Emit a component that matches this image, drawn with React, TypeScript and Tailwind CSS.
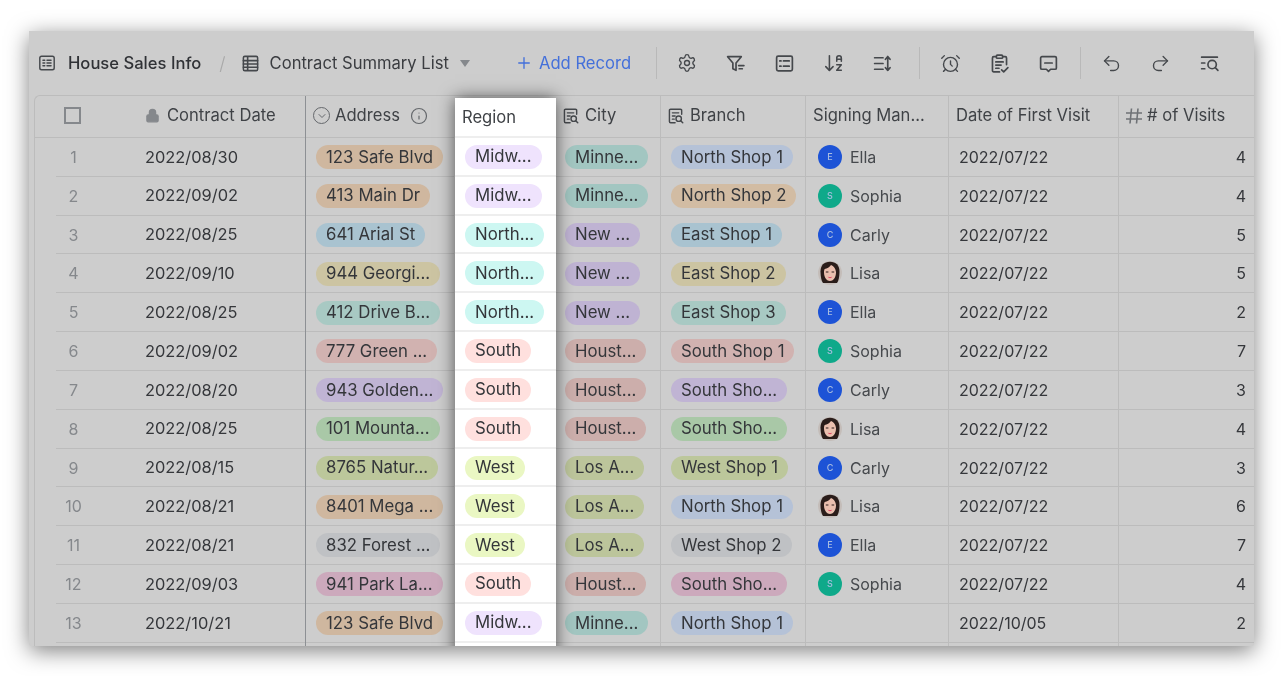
import React from "react";
import { Settings, ArrowDownAZ, AlarmClock, Undo2, Redo2, Plus, Lock, Info, ChevronDown } from "lucide-react";

const C = {
  tan: "bg-[#cfb79f]", sand: "bg-[#d2bca3]", lav: "bg-[#c0b4d4]", sky: "bg-[#a9c3d0]", khaki: "bg-[#ccc4a2]",
  teal: "bg-[#a8c9c3]", rose: "bg-[#d1b2b0]", green: "bg-[#a9c8a7]", olive: "bg-[#bcc79b]", grey: "bg-[#bfc1c4]",
  mauve: "bg-[#cca9bc]", blue: "bg-[#b5c2d7]", mint: "bg-[#a2c6c1]", newp: "bg-[#bfb3d3]", hou: "bg-[#ccaeab]", los: "bg-[#bcc59b]",
  mid: "bg-[#efe3fd]", north: "bg-[#cdf7f2]", south: "bg-[#ffe0de]", west: "bg-[#eaf7c3]",
};

const dates = ["2022/08/30","2022/09/02","2022/08/25","2022/09/10","2022/08/25","2022/09/02","2022/08/20","2022/08/25","2022/08/15","2022/08/21","2022/08/21","2022/09/03","2022/10/21",""];
const address: [string,string][] = [["123 Safe Blvd",C.tan],["413 Main Dr",C.tan],["641 Arial St",C.sky],["944 Georgi...",C.khaki],["412 Drive B...",C.teal],["777 Green ...",C.rose],["943 Golden...",C.lav],["101 Mounta...",C.green],["8765 Natur...",C.olive],["8401 Mega ...",C.tan],["832 Forest ...",C.grey],["941 Park La...",C.mauve],["123 Safe Blvd",C.tan]];
const region: [string,string][] = [["Midw...",C.mid],["Midw...",C.mid],["North...",C.north],["North...",C.north],["North...",C.north],["South",C.south],["South",C.south],["South",C.south],["West",C.west],["West",C.west],["West",C.west],["South",C.south],["Midw...",C.mid]];
const city: [string,string][] = [["Minne...",C.mint],["Minne...",C.mint],["New ...",C.newp],["New ...",C.newp],["New ...",C.newp],["Houst...",C.hou],["Houst...",C.hou],["Houst...",C.hou],["Los A...",C.los],["Los A...",C.los],["Los A...",C.los],["Houst...",C.hou],["Minne...",C.mint]];
const branch: [string,string][] = [["North Shop 1",C.blue],["North Shop 2",C.sand],["East Shop 1",C.sky],["East Shop 2",C.khaki],["East Shop 3",C.teal],["South Shop 1",C.rose],["South Sho...",C.lav],["South Sho...",C.green],["West Shop 1",C.olive],["North Shop 1",C.blue],["West Shop 2",C.grey],["South Sho...",C.mauve],["North Shop 1",C.blue]];
const people = ["Ella","Sophia","Carly","Lisa","Ella","Sophia","Carly","Lisa","Carly","Lisa","Ella","Sophia",""];
const firstVisit = [...Array(12).fill("2022/07/22"), "2022/10/05"];
const visits = [4,4,5,5,2,7,3,4,3,6,7,4,2];
const ROWS = 14;

const Pill = ({ t, c }: { t: string; c: string }) => (
  <span className={`${c} inline-flex h-[24px] items-center whitespace-nowrap rounded-full px-[10px] text-[16.8px] text-[#34363a]`}>{t}</span>
);

function Stroke({ children, size = 21 }: { children: React.ReactNode; size?: number }) {
  return (
    <svg width={size} height={size} viewBox="0 0 20 20" fill="none" stroke="#45484c" strokeWidth="1.6" strokeLinecap="round" strokeLinejoin="round">
      {children}
    </svg>
  );
}

const ListDoc = () => (
  <Stroke size={18}><rect x="2" y="2.5" width="16" height="15" rx="2" /><path d="M5.5 7h2M10 7h4.5M5.5 10h2M10 10h4.5M5.5 13h2M10 13h4.5" /></Stroke>
);
const GridDoc = () => (
  <Stroke size={19}><rect x="2.5" y="2.5" width="15" height="15" rx="1.5" /><path d="M2.5 7h15M2.5 10.5h15M2.5 14h15M7 3v14" strokeWidth="1.7" /></Stroke>
);
const FilterIc = () => (
  <Stroke><path d="M2.5 3.5h13l-5 6v7l-3-1.5V9.5z" /><path d="M13 12h5M13.5 15h3" /></Stroke>
);
const Fields = () => (
  <Stroke><rect x="2.5" y="3" width="15" height="14" rx="1.5" /><path d="M5.5 7.5h1.2M9 7.5h5.5M5.5 12.5h1.2M9 12.5h5.5" /></Stroke>
);
const RowH = () => (
  <Stroke><path d="M2.5 4.5h8M2.5 10h8M2.5 15.5h8M15 3.5v13M12.8 6l2.2-2.5L17.2 6M12.8 14l2.2 2.5 2.2-2.5" /></Stroke>
);
const ClipCheck = () => (
  <Stroke><path d="M7 3.5H4.5A1.2 1.2 0 0 0 3.3 4.7v12A1.2 1.2 0 0 0 4.5 18H10M13 3.5h2.5a1.2 1.2 0 0 1 1.2 1.2V11" /><rect x="7" y="2" width="6" height="3" rx="1" /><path d="M6.5 8.5h7M6.5 11.5h5M6.5 14.5h3M12 16l2 2 4-4" /></Stroke>
);
const Comment = () => (
  <Stroke><path d="M3.8 3.5h12.4a1.3 1.3 0 0 1 1.3 1.3v9.4a1.3 1.3 0 0 1-1.3 1.3h-4.2L10 17.5 8 15.5H3.8a1.3 1.3 0 0 1-1.3-1.3V4.8a1.3 1.3 0 0 1 1.3-1.3z" /><path d="M6.5 9.5h7" /></Stroke>
);
const FindIc = () => (
  <Stroke><path d="M2.5 4h15M2.5 9.5h3M2.5 15h3" /><circle cx="12.5" cy="11" r="4" /><path d="M15.5 14l2.5 2.5" /></Stroke>
);
const LookupIc = () => (
  <Stroke size={18}><path d="M9 17.5H4a1.3 1.3 0 0 1-1.3-1.3V3.8A1.3 1.3 0 0 1 4 2.5h11a1.3 1.3 0 0 1 1.3 1.3V8" /><path d="M6 6.5h7M6 10h3M6 13.5h2" /><circle cx="13" cy="13" r="3" /><path d="M15.2 15.2l2.3 2.3" /></Stroke>
);
const Hash = () => (
  <svg width="18" height="18" viewBox="0 0 18 18" fill="none" stroke="#6f7276" strokeWidth="1.6"><path d="M6.5 1.5L5 16.5M13 1.5L11.5 16.5M1 6h16M1 12h16" /></svg>
);

const Avatar = ({ letter, c }: { letter: string; c: string }) => (
  <span className={`${c} flex h-[24px] w-[24px] shrink-0 items-center justify-center rounded-full text-[9px] font-medium text-[#a9bde0]`}>{letter}</span>
);
const LisaFace = () => (
  <svg width="24" height="24" viewBox="0 0 24 24" className="shrink-0">
    <circle cx="12" cy="12" r="12" fill="#c4bdb9" />
    <path d="M12 .8C6 .8 2.5 4.5 2.5 10.5c0 5.500 1 9.500 2.500 11.500h14c1.500-2 2.500-6 2.500-11.500C21.500 4.500 18 .8 12 .8z" fill="#2a1d1a" />
    <path d="M13 4c-1.500 2.500-4 3.500-6.300 4-.6 1-.7 2.500-.7 3.500C6 16.500 9 20 12 20s6-3.500 6-8.500c0-3-2-6.500-5-7.500z" fill="#eabfae" />
    <path d="M7.800 11h2.600M13.600 11h2.600" stroke="#2e1f1c" strokeWidth="1.1" />
    <path d="M9.700 15.500c1.200.8 3.400.8 4.600 0-1 2.200-3.600 2.200-4.600 0z" fill="#e04f6a" />
  </svg>
);

function person(name: string) {
  if (name === "Ella") return <Avatar letter="E" c="bg-[#1d53d6]" />;
  if (name === "Carly") return <Avatar letter="C" c="bg-[#1d53d6]" />;
  if (name === "Sophia") return <Avatar letter="S" c="bg-[#0fa98a]" />;
  if (name === "Lisa") return <LisaFace />;
  return null;
}

function Column({ width, border, head, cell, headClass = "" }: { width: string; border: string; head: React.ReactNode; cell: (i: number) => React.ReactNode; headClass?: string }) {
  return (
    <div className={`${width} ${border} shrink-0 border-r`}>
      <div className={`flex h-[42px] items-center gap-[5px] border-b border-[#bcbcbc] pb-[2px] text-[16.6px] text-[#3f4246] ${headClass}`}>{head}</div>
      {Array.from({ length: ROWS }).map((_, i) => (
        <div key={i} className="flex h-[38.84px] items-center border-b border-[#bcbcbc]">{cell(i)}</div>
      ))}
    </div>
  );
}

const ToolBtn = ({ children }: { children: React.ReactNode }) => (
  <span className="flex w-[49px] justify-center">{children}</span>
);
const Divider = ({ m }: { m: string }) => <span className={`${m} block h-[32px] w-px shrink-0 bg-[#b9b9b9]`} />;

export default function App() {
  return (
    <div className="h-[676px] w-[1284px] overflow-hidden bg-white pl-[29px] pt-[31px] [font-family:Inter,'Liberation_Sans',sans-serif] antialiased blur-[0.4px]">
      <div className="h-[615px] w-[1225px] overflow-hidden rounded-b-[3px] bg-[#cdcdcd] shadow-[0_5px_22px_rgba(0,0,0,0.5)]">
        <div className="flex h-[64px] items-center pl-[9px] text-[#2f3236]">
          <ListDoc />
          <span className="ml-[12px] pt-[1px] text-[16.6px] font-medium text-[#303236]">House Sales Info</span>
          <span className="ml-[18px] text-[18px] font-light text-[#a8a8a8]">/</span>
          <span className="ml-[15px]"><GridDoc /></span>
          <span className="ml-[10px] pt-[1px] text-[16.6px] text-[#3a3c40]">Contract Summary List</span>
          <span className="ml-[11px] h-0 w-0 border-x-[5px] border-t-[7px] border-x-transparent border-t-[#85888c]" />
          <span className="ml-[45px] flex items-center gap-[6px] pt-[1px] text-[16.6px] text-[#4470da]">
            <Plus size={18} strokeWidth={1.8} color="#4470da" />Add Record
          </span>
          <Divider m="ml-[25px]" />
          <span className="ml-[5px] flex items-center">
            <ToolBtn><Settings size={20} color="#45484c" strokeWidth={1.6} /></ToolBtn>
            <ToolBtn><FilterIc /></ToolBtn>
            <ToolBtn><Fields /></ToolBtn>
            <ToolBtn><ArrowDownAZ size={22} color="#45484c" strokeWidth={1.7} /></ToolBtn>
            <ToolBtn><RowH /></ToolBtn>
          </span>
          <Divider m="ml-[12px]" />
          <span className="ml-[6px] flex items-center">
            <ToolBtn><AlarmClock size={21} color="#45484c" strokeWidth={1.6} /></ToolBtn>
            <ToolBtn><ClipCheck /></ToolBtn>
            <ToolBtn><Comment /></ToolBtn>
          </span>
          <Divider m="ml-[7px]" />
          <span className="ml-[6px] flex items-center">
            <ToolBtn><Undo2 size={21} color="#45484c" strokeWidth={1.6} /></ToolBtn>
            <ToolBtn><Redo2 size={21} color="#45484c" strokeWidth={1.6} /></ToolBtn>
            <ToolBtn><FindIc /></ToolBtn>
          </span>
        </div>

        <div className="ml-[5px] flex rounded-tl-[6px] border-l border-t border-[#bcbcbc]">
          <div className="w-[271px] shrink-0 border-r border-[#8d9094]">
            <div className="flex h-[42px] items-center border-b border-[#bcbcbc] pb-[2px] text-[16.6px] text-[#3f4246]">
              <span className="ml-[29px] h-[17px] w-[17px] border-2 border-[#85888c]" />
              <Lock size={15} className="ml-[64px]" color="#85888c" fill="#85888c" />
              <span className="ml-[7px]">Contract Date</span>
            </div>
            {dates.map((d, i) => (
              <div key={i} className="ml-[21px] flex h-[38.84px] items-center border-b border-[#bcbcbc] text-[16px]">
                <span className="w-[35px] text-center text-[#85888c]">{i < 13 ? i + 1 : ""}</span>
                <span className="ml-[54px] text-[16.4px] text-[#35373b]">{d}</span>
              </div>
            ))}
          </div>

          <Column width="w-[149px]" border="border-transparent" headClass="pl-[7px]"
            head={<><span className="flex h-[17px] w-[17px] items-center justify-center rounded-full border-[1.5px] border-[#65686c]"><ChevronDown size={12} color="#65686c" /></span><span>Address</span><Info size={18} className="ml-[5px]" color="#65686c" strokeWidth={1.6} /></>}
            cell={(i) => address[i] ? <span className="ml-[10px]"><Pill t={address[i][0]} c={address[i][1]} /></span> : null} />

          <div className="relative z-10 mt-[2px] w-[101px] shrink-0 bg-white shadow-[0_0_16px_rgba(0,0,0,0.6)]">
            <div className="flex h-[40px] items-center border-b-2 border-[#eeeeee] pl-[7px] text-[16.6px] text-[#3f4246]">Region</div>
            {Array.from({ length: ROWS }).map((_, i) => (
              <div key={i} className="flex h-[38.84px] items-center border-b-2 border-[#eeeeee] pl-[10px] pt-[1px]">
                {region[i] && <Pill t={region[i][0]} c={region[i][1]} />}
              </div>
            ))}
          </div>

          <Column width="w-[105px]" border="border-[#bcbcbc]" headClass="pl-[6px]"
            head={<><LookupIc /><span>City</span></>}
            cell={(i) => city[i] ? <span className="ml-[9px]"><Pill t={city[i][0]} c={city[i][1]} /></span> : null} />
          <Column width="w-[145px]" border="border-[#bcbcbc]" headClass="pl-[6px]"
            head={<><LookupIc /><span>Branch</span></>}
            cell={(i) => branch[i] ? <span className="ml-[10px]"><Pill t={branch[i][0]} c={branch[i][1]} /></span> : null} />
          <Column width="w-[143px]" border="border-[#bcbcbc]" headClass="pl-[7px]"
            head={<span>Signing Man...</span>}
            cell={(i) => (
              <span className="ml-[12px] flex items-center gap-[8px] text-[16px] text-[#46494d]">
                {person(people[i])}<span>{people[i]}</span>
              </span>
            )} />
          <Column width="w-[170px]" border="border-[#bcbcbc]" headClass="pl-[7px]"
            head={<span>Date of First Visit</span>}
            cell={(i) => <span className="ml-[10px] text-[16px] text-[#35373b]">{firstVisit[i]}</span>} />
          <div className="w-[135px] shrink-0">
            <div className="flex h-[42px] items-center gap-[4px] border-b border-[#bcbcbc] pb-[2px] pl-[6px] text-[16.6px] text-[#3f4246]"><Hash /><span># of Visits</span></div>
            {Array.from({ length: ROWS }).map((_, i) => (
              <div key={i} className="flex h-[38.84px] items-center justify-end border-b border-[#bcbcbc] pr-[8px] text-[16px] text-[#35373b]">{visits[i]}</div>
            ))}
          </div>
        </div>
      </div>
    </div>
  );
}
